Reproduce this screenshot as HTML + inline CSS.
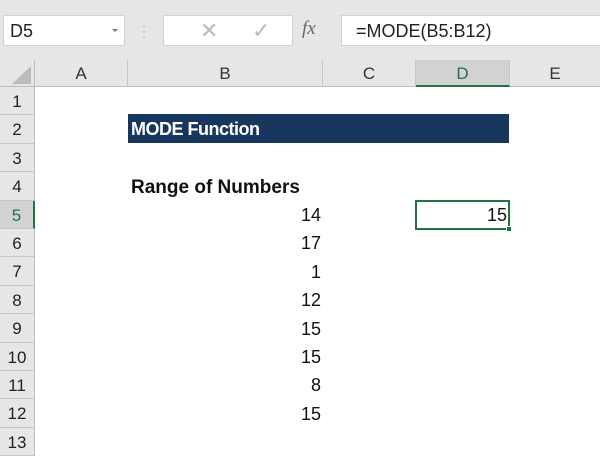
<!DOCTYPE html>
<html><head><meta charset="utf-8"><style>
*{margin:0;padding:0;box-sizing:border-box}
body{width:600px;height:458px;overflow:hidden;background:#fff;font-family:"Liberation Sans",Calibri,sans-serif;position:relative}
.a{position:absolute}
.tb{left:0;top:0;width:600px;height:60px;background:#e6e6e6}
.box{background:#fff;border:1px solid #d4d4d4}
.ch{top:60px;height:27px;background:#e6e6e6;border-bottom:1px solid #bdbdbd;font-size:17px;color:#333;text-align:center;line-height:28px;border-right:1px solid #c8c8c8}
.rh{left:0;width:35px;height:28.4px;background:#e6e6e6;border-bottom:1px solid #c8c8c8;border-right:1px solid #bdbdbd;font-size:17px;color:#222;text-align:center;line-height:29px}
.num{font-size:18px;color:#111;text-align:right;height:28px;line-height:29px}
</style></head><body>
<div class="a tb"></div>
<div class="a box" style="left:3px;top:15px;width:122px;height:31px;font-size:18px;line-height:30px;padding-left:6px;color:#222">D5</div>
<div class="a" style="left:112px;top:29px;width:0;height:0;border-left:3px solid transparent;border-right:3px solid transparent;border-top:3px solid #777"></div>
<div class="a" style="left:142px;top:22px;color:#aaa;font-size:12px;line-height:6px">·<br>·<br>·</div>
<div class="a box" style="left:163px;top:15px;width:130px;height:31px"></div>
<div class="a" style="left:200px;top:18px;font-size:22px;color:#bbb">✕</div>
<div class="a" style="left:252px;top:18px;font-size:22px;color:#bbb">✓</div>
<div class="a" style="left:302px;top:18px;font-size:19px;color:#666;font-family:'Liberation Serif',serif;font-style:italic">fx</div>
<div class="a box" style="left:341px;top:15px;width:262px;height:31px;font-size:18px;line-height:30px;padding-left:14px;color:#222">=MODE(B5:B12)</div>
<div class="a" style="left:0;top:60px;width:35px;height:27px;background:#e6e6e6;border-right:1px solid #bdbdbd;border-bottom:1px solid #bdbdbd"></div>
<div class="a" style="left:12px;top:66px;width:0;height:0;border-left:19px solid transparent;border-bottom:18px solid #bcbcbc"></div>
<div class="a ch" style="left:35px;width:93px">A</div>
<div class="a ch" style="left:128px;width:195px">B</div>
<div class="a ch" style="left:323px;width:93px">C</div>
<div class="a ch" style="left:416px;width:94px;background:#d2d2d2;border-bottom:2px solid #217346;color:#217346">D</div>
<div class="a ch" style="left:510px;width:90px;border-right:none">E</div>
<div class="a rh" style="top:87px">1</div>
<div class="a rh" style="top:115.4px">2</div>
<div class="a rh" style="top:143.8px">3</div>
<div class="a rh" style="top:172.2px">4</div>
<div class="a rh" style="top:200.6px;background:#d2d2d2;color:#217346;border-right:2px solid #217346">5</div>
<div class="a rh" style="top:229px">6</div>
<div class="a rh" style="top:257.4px">7</div>
<div class="a rh" style="top:285.8px">8</div>
<div class="a rh" style="top:314.2px">9</div>
<div class="a rh" style="top:342.6px">10</div>
<div class="a rh" style="top:371px">11</div>
<div class="a rh" style="top:399.4px">12</div>
<div class="a rh" style="top:427.8px">13</div>
<div class="a" style="left:128px;top:114px;width:381px;height:29px;background:#17375e;color:#fff;font-weight:bold;font-size:18px;line-height:31px;padding-left:3px;letter-spacing:-0.5px">MODE Function</div>
<div class="a" style="left:131px;top:173px;font-size:19px;font-weight:bold;line-height:29px;color:#111">Range of Numbers</div>
<div class="a num" style="left:128px;width:193px;top:201px">14</div>
<div class="a num" style="left:128px;width:193px;top:229.4px">17</div>
<div class="a num" style="left:128px;width:193px;top:257.8px">1</div>
<div class="a num" style="left:128px;width:193px;top:286.2px">12</div>
<div class="a num" style="left:128px;width:193px;top:314.6px">15</div>
<div class="a num" style="left:128px;width:193px;top:343px">15</div>
<div class="a num" style="left:128px;width:193px;top:371.4px">8</div>
<div class="a num" style="left:128px;width:193px;top:399.8px">15</div>
<div class="a" style="left:415px;top:200px;width:95px;height:30px;border:2px solid #217346"></div>
<div class="a num" style="left:416px;width:91px;top:201px">15</div>
<div class="a" style="left:506px;top:226px;width:6px;height:6px;background:#217346;border:1px solid #fff"></div>
</body></html>
